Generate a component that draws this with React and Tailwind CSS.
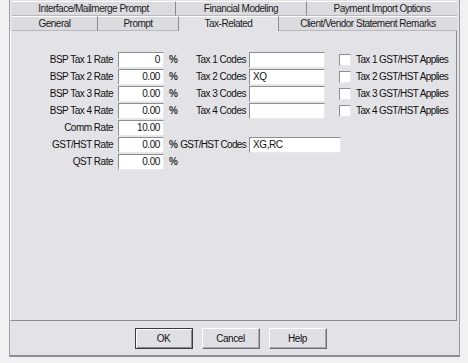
import React from 'react';

const font = { fontFamily: '"Liberation Sans", Arial, sans-serif' };

const rows = [
    { label: 'BSP Tax 1 Rate', value: '0', pct: true, code: 'Tax 1 Codes', codeValue: '', check: 'Tax 1 GST/HST Applies' },
    { label: 'BSP Tax 2 Rate', value: '0.00', pct: true, code: 'Tax 2 Codes', codeValue: 'XQ', check: 'Tax 2 GST/HST Applies' },
    { label: 'BSP Tax 3 Rate', value: '0.00', pct: true, code: 'Tax 3 Codes', codeValue: '', check: 'Tax 3 GST/HST Applies' },
    { label: 'BSP Tax 4 Rate', value: '0.00', pct: true, code: 'Tax 4 Codes', codeValue: '', check: 'Tax 4 GST/HST Applies' },
    { label: 'Comm Rate', value: '10.00', pct: false },
    { label: 'GST/HST Rate', value: '0.00', pct: true, code: 'GST/HST Codes', codeValue: 'XG,RC', wide: true },
    { label: 'QST Rate', value: '0.00', pct: true },
];

const Tab = ({ label, width, active, last }) => (
    <div
        className={`h-[15px] shrink-0 flex items-center justify-center border-t border-t-white ${last ? '' : 'border-r border-r-[#8a8a94]'} ${active ? 'bg-[#e3e2e7]' : 'bg-[#dcdbe0] border-b border-b-[#b8b8c0]'}`}
        style={{ width }}
    >
        <span className="text-[10px] tracking-[-0.5px] leading-none whitespace-nowrap text-[#1a1a1a]">{label}</span>
    </div>
);

const Field = ({ value, width, align = 'right' }) => (
    <div
        className={`h-[16px] shrink-0 bg-white border-t border-l border-t-[#8d8d96] border-l-[#8d8d96] border-b border-r border-b-[#e8e8ec] border-r-[#e8e8ec] flex items-center px-[3px] text-[10px] tracking-[-0.4px] leading-none text-[#111] ${align === 'right' ? 'justify-end' : 'justify-start'}`}
        style={{ width }}
    >
        {value}
    </div>
);

const Button = ({ label, isDefault }) => (
    <button
        type="button"
        className={`w-[58px] h-[21px] bg-[#e0dfe4] text-[10px] tracking-[-0.4px] text-[#111] flex items-center justify-center border ${isDefault ? 'border-[#3a3a40] shadow-[inset_1px_1px_0_#fff,inset_-1px_-1px_0_#8a8a94]' : 'border-t-white border-l-white border-b-[#6e6e78] border-r-[#6e6e78] shadow-[inset_-1px_-1px_0_#a8a8b0]'}`}
    >
        {label}
    </button>
);

export default function App() {
    return (
        <div className="w-[468px] h-[363px] bg-[#f1f1f4] overflow-hidden" style={font}>
            <div className="ml-[9px] w-[451px] h-[357px] bg-[#e3e2e7] border-l border-l-[#a0a0aa] border-r border-r-[#9a9aa4] border-b-2 border-b-[#8c8c98] flex flex-col">
                {/* Tabs */}
                <div className="pl-[2px] pt-[1px]">
                    <div className="flex">
                        <Tab label="Interface/Mailmerge Prompt" width={164} />
                        <Tab label="Financial Modeling" width={131} />
                        <Tab label="Payment Import Options" width={150} last />
                    </div>
                    <div className="flex">
                        <Tab label="General" width={86} />
                        <Tab label="Prompt" width={81} />
                        <Tab label="Tax-Related" width={100} active />
                        <Tab label="Client/Vendor Statement Remarks" width={178} last />
                    </div>
                </div>

                {/* Panel */}
                <div className="w-[447px] h-[290px] border-r border-r-[#8a8a94] border-b border-b-[#8a8a94] border-l border-l-white pt-[20px]">
                    {rows.map((r, i) => (
                        <div key={i} className="h-[17px] flex items-center whitespace-nowrap text-[10px] tracking-[-0.5px] text-[#111]">
                            <div className="w-[103px] shrink-0 text-right pr-[1px]">{r.label}</div>
                            <div className="ml-[4px]"><Field value={r.value} width={46} /></div>
                            <div className="w-[14px] shrink-0 pl-[5px] font-bold text-[#333]">{r.pct ? '%' : ''}</div>
                            {r.code && (
                                <>
                                    <div className={`w-[68px] shrink-0 text-right ${r.wide ? 'tracking-[-0.7px]' : ''}`}>{r.code}</div>
                                    <div className="ml-[3px]"><Field value={r.codeValue} width={r.wide ? 92 : 76} align="left" /></div>
                                </>
                            )}
                            {r.check && (
                                <div className="ml-[14px] flex items-center gap-[5px] tracking-[-0.6px]">
                                    <div className="w-[12px] h-[12px] shrink-0 bg-white border-t border-l border-t-[#8d8d96] border-l-[#8d8d96] border-b border-r border-b-[#e8e8ec] border-r-[#e8e8ec]" />
                                    <span>{r.check}</span>
                                </div>
                            )}
                        </div>
                    ))}
                </div>

                {/* Buttons */}
                <div className="flex-1 flex items-start justify-center gap-[9px] pt-[7px] pr-[8px]">
                    <Button label="OK" isDefault />
                    <Button label="Cancel" />
                    <Button label="Help" />
                </div>
            </div>
        </div>
    );
}
